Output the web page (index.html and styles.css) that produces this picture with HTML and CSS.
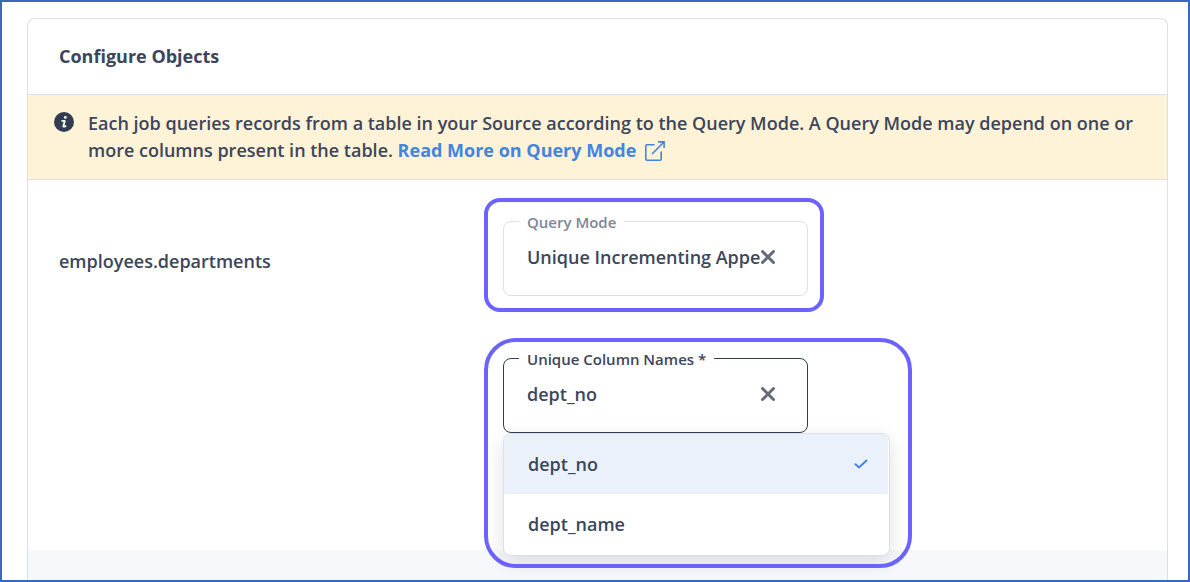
FILE: index.html
```html
<!DOCTYPE html>
<html lang="en">
<head>
    <meta charset="UTF-8">
    <meta name="viewport" content="width=device-width, initial-scale=1.0">
    <title>Configure Objects</title>
    <link rel="stylesheet" href="styles.css">
</head>
<body>
    <main class="card">
        <h1 class="card-header">Configure Objects</h1>

        <div class="notice">
            <svg class="notice-icon" viewBox="0 0 20 20" aria-hidden="true">
                <circle cx="10" cy="10" r="10" fill="#333d51"/>
                <circle cx="11.3" cy="5.4" r="1.4" fill="#fff"/>
                <path d="M8.2 8.9 H10.8 L9.3 14.2 Q9.2 15.2 11.6 14.2" fill="none" stroke="#fff" stroke-width="1.8" stroke-linejoin="round" stroke-linecap="round"/>
            </svg>
            <p class="notice-text">
                Each job queries records from a table in your Source according to the Query Mode. A Query Mode may depend on one or more columns present in the table.
                <a class="notice-link" href="#">Read More on Query Mode
                    <svg class="link-icon" viewBox="0 0 20 20" aria-hidden="true">
                        <path d="M9.5 3.8 H2 a1.2 1.2 0 0 0 -1.2 1.2 V18 a1.2 1.2 0 0 0 1.2 1.2 H15 a1.2 1.2 0 0 0 1.2 -1.2 V10.5 M7 13 L19 1 M13 0.9 H19.1 V7" fill="none" stroke="#4285de" stroke-width="1.6"/>
                    </svg></a>
            </p>
        </div>

        <div class="object-row">
            <div class="object-name">employees.departments</div>
            <div class="object-fields">
                <div class="field-wrap highlight">
                    <fieldset class="field">
                        <legend><label for="query-mode">Query Mode</label></legend>
                        <div class="field-control">
                            <input id="query-mode" type="text" role="combobox" aria-expanded="false" value="Unique Incrementing Appe">
                            <button type="button" class="clear" aria-label="Clear">
                                <svg viewBox="0 0 16 16"><path d="M2.5 2.5 L13.5 13.5 M13.5 2.5 L2.5 13.5"/></svg>
                            </button>
                        </div>
                    </fieldset>
                </div>

                <div class="field-wrap highlight highlight-open">
                    <fieldset class="field active">
                        <legend><label for="column-names">Unique Column Names *</label></legend>
                        <div class="field-control">
                            <input id="column-names" type="text" role="combobox" aria-expanded="true" aria-controls="column-menu" value="dept_no">
                            <button type="button" class="clear" aria-label="Clear">
                                <svg viewBox="0 0 16 16"><path d="M2.5 2.5 L13.5 13.5 M13.5 2.5 L2.5 13.5"/></svg>
                            </button>
                        </div>
                    </fieldset>
                    <ul class="menu" id="column-menu" role="listbox">
                        <li class="option selected" role="option" aria-selected="true">
                            dept_no
                            <svg class="check" viewBox="0 0 14 10" aria-hidden="true"><path d="M1.5 5.2 L5 8.5 L12.5 1.5"/></svg>
                        </li>
                        <li class="option" role="option" aria-selected="false">dept_name</li>
                    </ul>
                </div>
            </div>
        </div>

        <div class="card-footer"></div>
    </main>
</body>
</html>
```

FILE: styles.css
```css
* {
    box-sizing: border-box;
}

body {
    margin: 0;
    height: 100vh;
    padding: 16px 20px 0 25px;
    border: 2px solid #3a68c0;
    background: #fff;
    color: #3c465b;
    font-family: "Open Sans", "Noto Sans", sans-serif;
    font-size: 18px;
    font-weight: 600;
    display: flex;
    flex-direction: column;
    overflow: hidden;
}

.card {
    flex: 1;
    display: flex;
    flex-direction: column;
    border: 1px solid #dcdfe7;
    border-bottom: 0;
    border-radius: 8px 8px 0 0;
}

.card-header {
    margin: 0;
    padding: 24px 31px;
    font-size: 18px;
    line-height: 27px;
    font-weight: 700;
}

/* Yellow info bar */
.notice {
    display: flex;
    gap: 14px;
    padding: 15px 32px 15px 26px;
    border-top: 1px solid #dcdfe7;
    border-bottom: 1px solid #dcdfe7;
    background: #fef2d7;
}

.notice-icon {
    flex: none;
    width: 20px;
    height: 24px;
}

.notice-text {
    margin: 0;
    line-height: 27px;
}

.notice-link {
    color: #4285de;
    font-weight: 700;
    text-decoration: none;
}

.link-icon {
    width: 20px;
    height: 20px;
    margin-left: 4px;
    vertical-align: -4px;
}

/* One row per source table */
.object-row {
    display: grid;
    grid-template-columns: 444px 305px;
    height: 370px;
    padding: 31px;
}

.object-name {
    padding-top: 37px;
    line-height: 27px;
}

.object-fields {
    display: flex;
    flex-direction: column;
    gap: 52px;
}

.field-wrap {
    position: relative;
}

.field {
    margin: 0;
    padding: 0 15px;
    height: 85px;
    border: 1px solid #dcdfe7;
    border-radius: 8px;
}

.field legend {
    padding: 2px 8px 0;
    color: #7f8696;
    font-size: 15px;
    line-height: 18px;
}

.field.active {
    border-color: #333d51;
}

.field.active legend {
    color: #3c465b;
}

.field-control {
    display: flex;
    align-items: center;
    padding: 12px 16px 0 8px;
}

.field-control input {
    flex: 1;
    min-width: 0;
    height: 27px;
    padding: 0;
    border: 0;
    outline: 0;
    background: none;
    color: inherit;
    font: inherit;
}

.clear {
    flex: none;
    width: 16px;
    height: 16px;
    padding: 0;
    border: 0;
    background: none;
}

.clear svg {
    display: block;
    fill: none;
    stroke: #626a7b;
    stroke-width: 3;
    stroke-linecap: round;
}

/* Open drop-down list */
.menu {
    position: absolute;
    top: 100%;
    left: 0;
    width: 387px;
    margin: 0;
    padding: 0 1px 1px 0;
    list-style: none;
    border: 1px solid #dcdfe7;
    border-radius: 8px;
    background: #fff;
    box-shadow: 0 6px 20px rgba(0, 0, 0, 0.12);
    overflow: hidden;
}

.option {
    display: flex;
    align-items: center;
    justify-content: space-between;
    height: 60px;
    padding: 0 20px 0 24px;
}

.option.selected {
    background: #eaf1fb;
}

.check {
    width: 14px;
    height: 10px;
    fill: none;
    stroke: #4285de;
    stroke-width: 2;
    stroke-linecap: round;
}

/* Purple frame drawn around a field */
.highlight::after {
    content: "";
    position: absolute;
    top: -13px;
    right: -16px;
    bottom: -16px;
    left: -19px;
    border: 4px solid #6c63ff;
    border-radius: 16px;
    pointer-events: none;
}

.highlight-open::after {
    top: -10px;
    right: -104px;
    bottom: -135px;
    border-radius: 32px;
}

.card-footer {
    flex: 1;
    background: #f7f8fc;
}
```
